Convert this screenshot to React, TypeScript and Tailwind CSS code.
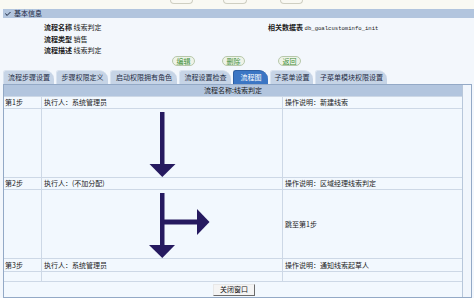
import React from "react";

const NAVY = "#261a60";

function Tab({ label, w, active }: { label: string; w: number; active?: boolean }) {
  return (
    <div
      style={{ width: w }}
      className={
        "h-[14px] flex items-center justify-center rounded-tl-[3px] rounded-tr-[9px] text-[7px] leading-none border-t border-l " +
        (active
          ? "bg-[#3b76c4] text-white border-[#2d5fa3]"
          : "bg-[#c6d4e6] text-[#1f2d45] border-[#d9e3ef]")
      }
    >
      {label}
    </div>
  );
}

function Pill({ label }: { label: string }) {
  return (
    <div className="w-[23px] h-[10px] rounded-full border border-[#b7c8ab] bg-[#eef3e8] text-[#3f8f3a] text-[7px] leading-none flex items-center justify-center">
      {label}
    </div>
  );
}

function StepRow({ step, who, op, h = 12 }: { step: string; who: string; op: string; h?: number }) {
  return (
    <div style={{ height: h }} className="flex border-b border-[#cdd8e6] text-[7px] leading-none text-[#1b1b1b]">
      <div className="w-[38px] pl-[1px] flex items-center border-r border-[#cdd8e6]">{step}</div>
      <div className="w-[241px] pl-[2px] flex items-center border-r border-[#cdd8e6]">{who}</div>
      <div className="flex-1 pl-[2px] flex items-center">{op}</div>
    </div>
  );
}

export default function App() {
  return (
    <div className="w-[474px] h-[303px] bg-white font-['Noto_Sans_CJK_SC','Noto_Sans',sans-serif] overflow-hidden">
      <div className="h-[298px] bg-[#f3f7fc] flex flex-col">
        {/* top strip */}
        <div className="h-[10px] bg-[#f9f9f3] flex items-start pl-[170px]">
          <div className="w-[23px] h-[4px] rounded-b-full border-b border-x border-[#cfcfc2]" />
          <div className="w-[24px] h-[4px] rounded-b-full border-b border-x border-[#cfcfc2] ml-[30px]" />
          <div className="w-[23px] h-[4px] rounded-b-full border-b border-x border-[#cfcfc2] ml-[33px]" />
        </div>
        {/* header bar */}
        <div className="h-[10px] ml-[3px] bg-[#b2c5de] flex items-center text-[7px] leading-none text-[#1a2640]">
          <svg width="6" height="6" viewBox="0 0 6 6" className="ml-[2px] mr-[3px]">
            <path d="M0.5 2.5 L2 4.5 L5.5 1" stroke="#1a2640" strokeWidth="1" fill="none" />
          </svg>
          基本信息
        </div>
        {/* info rows */}
        <div className="pt-[4px] text-[7px] leading-[11px] text-[#1b1b1b]">
          <div className="flex">
            <div className="w-[268px] pl-[44px]">
              <span className="font-bold">流程名称</span> 线索判定
            </div>
            <div>
              <span className="font-bold">相关数据表</span>{" "}
              <span className="font-['Liberation_Mono',monospace] text-[5.6px]">db_goalcustominfo_init</span>
            </div>
          </div>
          <div className="pl-[44px]">
            <span className="font-bold">流程类型</span> 销售
          </div>
          <div className="pl-[44px]">
            <span className="font-bold">流程描述</span> 线索判定
          </div>
        </div>
        {/* buttons */}
        <div className="mt-[0px] h-[10px] flex pl-[172px] gap-[27px]">
          <Pill label="编辑" />
          <div className="flex gap-[33px]">
            <Pill label="删除" />
            <Pill label="返回" />
          </div>
        </div>
        {/* tabs */}
        <div className="mt-[4px] flex items-end gap-[2px] pl-[3px]">
          <Tab label="流程步骤设置" w={51} />
          <Tab label="步骤权限定义" w={52} />
          <Tab label="启动权限拥有角色" w={67} />
          <Tab label="流程设置检查" w={52} />
          <Tab label="流程图" w={35} active />
          <Tab label="子菜单设置" w={43} />
          <Tab label="子菜单模块权限设置" w={72} />
        </div>
        {/* panel */}
        <div className="ml-[3px] w-[469px] flex-1 border border-[#93a9c6] bg-[#f1f6fc] flex flex-col">
          <div className="w-[459px] border-r border-[#b8c7da] bg-[#f2f8fe] flex flex-col">
            <div className="h-[12px] bg-[#b2c5de] border-b border-[#cdd8e6] flex items-center justify-center text-[7px] leading-none text-[#1b1b1b]">
              流程名称:线索判定
            </div>
            <StepRow step="第1步" who="执行人：系统管理员" op="操作说明：新建线索" />
            <div className="h-[69px] flex border-b border-[#cdd8e6]">
              <div className="w-[38px] border-r border-[#cdd8e6]" />
              <div className="w-[241px] border-r border-[#cdd8e6]">
                <svg width="241" height="69" viewBox="0 0 241 69">
                  <rect x="118" y="3" width="4.5" height="53" fill={NAVY} />
                  <polygon points="107.5,55 133.5,55 120.3,68" fill={NAVY} />
                </svg>
              </div>
              <div className="flex-1" />
            </div>
            <StepRow step="第2步" who="执行人：(不加分配)" op="操作说明：区域经理线索判定" />
            <div className="h-[69px] flex border-b border-[#cdd8e6]">
              <div className="w-[38px] border-r border-[#cdd8e6]" />
              <div className="w-[241px] border-r border-[#cdd8e6]">
                <svg width="241" height="69" viewBox="0 0 241 69">
                  <rect x="118" y="3" width="4.5" height="53" fill={NAVY} />
                  <polygon points="107,55 133,55 120.3,68" fill={NAVY} />
                  <rect x="120" y="29.5" width="36" height="5" fill={NAVY} />
                  <polygon points="155,19 155,45 167.5,32" fill={NAVY} />
                </svg>
              </div>
              <div className="flex-1 pl-[2px] flex items-center text-[7px] leading-none text-[#1b1b1b]">跳至第1步</div>
            </div>
            <StepRow step="第3步" who="执行人：系统管理员" op="操作说明：通知线索起草人" h={13} />
            <div className="h-[10px] flex border-b border-[#cdd8e6]">
              <div className="w-[38px] border-r border-[#cdd8e6]" />
              <div className="w-[241px] border-r border-[#cdd8e6]" />
              <div className="flex-1" />
            </div>
            <div className="h-[15px] flex items-center pl-[209px]">
              <div className="h-[12px] w-[42px] bg-[#f4f4f4] border border-t-[#e8e8e8] border-l-[#e8e8e8] border-r-[#6b6b6b] border-b-[#6b6b6b] flex items-center justify-center text-[7px] leading-none text-[#111]">
                关闭窗口
              </div>
            </div>
          </div>
        </div>
      </div>
    </div>
  );
}
